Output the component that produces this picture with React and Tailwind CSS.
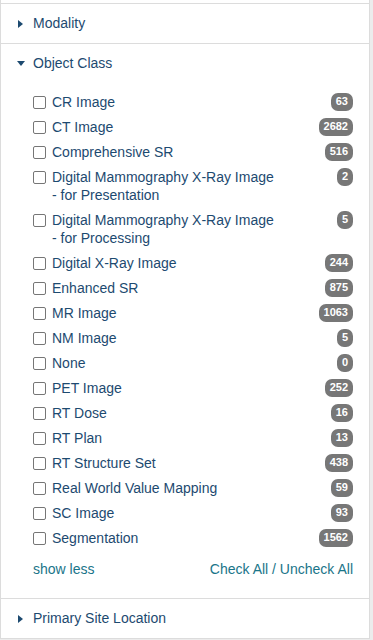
import React from 'react';

const items = [
  { label: 'CR Image', count: 63 },
  { label: 'CT Image', count: 2682 },
  { label: 'Comprehensive SR', count: 516 },
  { label: 'Digital Mammography X-Ray Image - for Presentation', count: 2 },
  { label: 'Digital Mammography X-Ray Image - for Processing', count: 5 },
  { label: 'Digital X-Ray Image', count: 244 },
  { label: 'Enhanced SR', count: 875 },
  { label: 'MR Image', count: 1063 },
  { label: 'NM Image', count: 5 },
  { label: 'None', count: 0 },
  { label: 'PET Image', count: 252 },
  { label: 'RT Dose', count: 16 },
  { label: 'RT Plan', count: 13 },
  { label: 'RT Structure Set', count: 438 },
  { label: 'Real World Value Mapping', count: 59 },
  { label: 'SC Image', count: 93 },
  { label: 'Segmentation', count: 1562 },
];

const CaretRight = () => (
  <svg width="5" height="8" viewBox="0 0 5 8" className="fill-[#1d4a70]">
    <path d="M0 0 L5 4 L0 8 Z" />
  </svg>
);

const CaretDown = () => (
  <svg width="8" height="5" viewBox="0 0 8 5" className="fill-[#1d4a70]">
    <path d="M0 0 L8 0 L4 5 Z" />
  </svg>
);

const Header = ({ open, children }) => (
  <div className="h-[39px] flex items-center pl-[16px] text-[14px] text-[#1d4a70]">
    <span className="w-[16px] flex items-center">
      {open ? <CaretDown /> : <span className="pl-[1px] flex"><CaretRight /></span>}
    </span>
    <span>{children}</span>
  </div>
);

export default function App() {
  return (
    <div className="w-[373px] h-[640px] bg-[#ececec] font-['Liberation_Sans',Arial,sans-serif] overflow-hidden">
      <div className="w-[370px] h-[639px] bg-white border-l border-r border-b border-[#dcdcdc] pt-[3px]">
        {/* Modality */}
        <div className="border-t border-b border-[#dcdcdc]">
          <Header>Modality</Header>
        </div>

        {/* Object Class */}
        <div className="border-b border-[#dcdcdc] pb-[20px]">
          <Header open>Object Class</Header>
          <ul className="pt-[6px] pl-[32px] pr-[16px] text-[14px] leading-[18px] text-[#1d4a70]">
            {items.map((it) => (
              <li key={it.label} className="flex items-start py-[3.5px]">
                <span className="mt-[3px] w-[13px] h-[13px] shrink-0 border border-[#767676] rounded-[2px] bg-white" />
                <span className="ml-[6px] w-[228px]">{it.label}</span>
                <span className="ml-auto bg-[#777] text-white text-[11px] font-bold leading-none px-[5px] py-[3.5px] rounded-[7px]">
                  {it.count}
                </span>
              </li>
            ))}
          </ul>
          <div className="flex justify-between pl-[32px] pr-[16px] mt-[10px] text-[14px] leading-[18px] text-[#1a7589]">
            <a href="#">show less</a>
            <a href="#">Check All / Uncheck All</a>
          </div>
        </div>

        {/* Primary Site Location */}
        <Header>Primary Site Location</Header>
      </div>
    </div>
  );
}
